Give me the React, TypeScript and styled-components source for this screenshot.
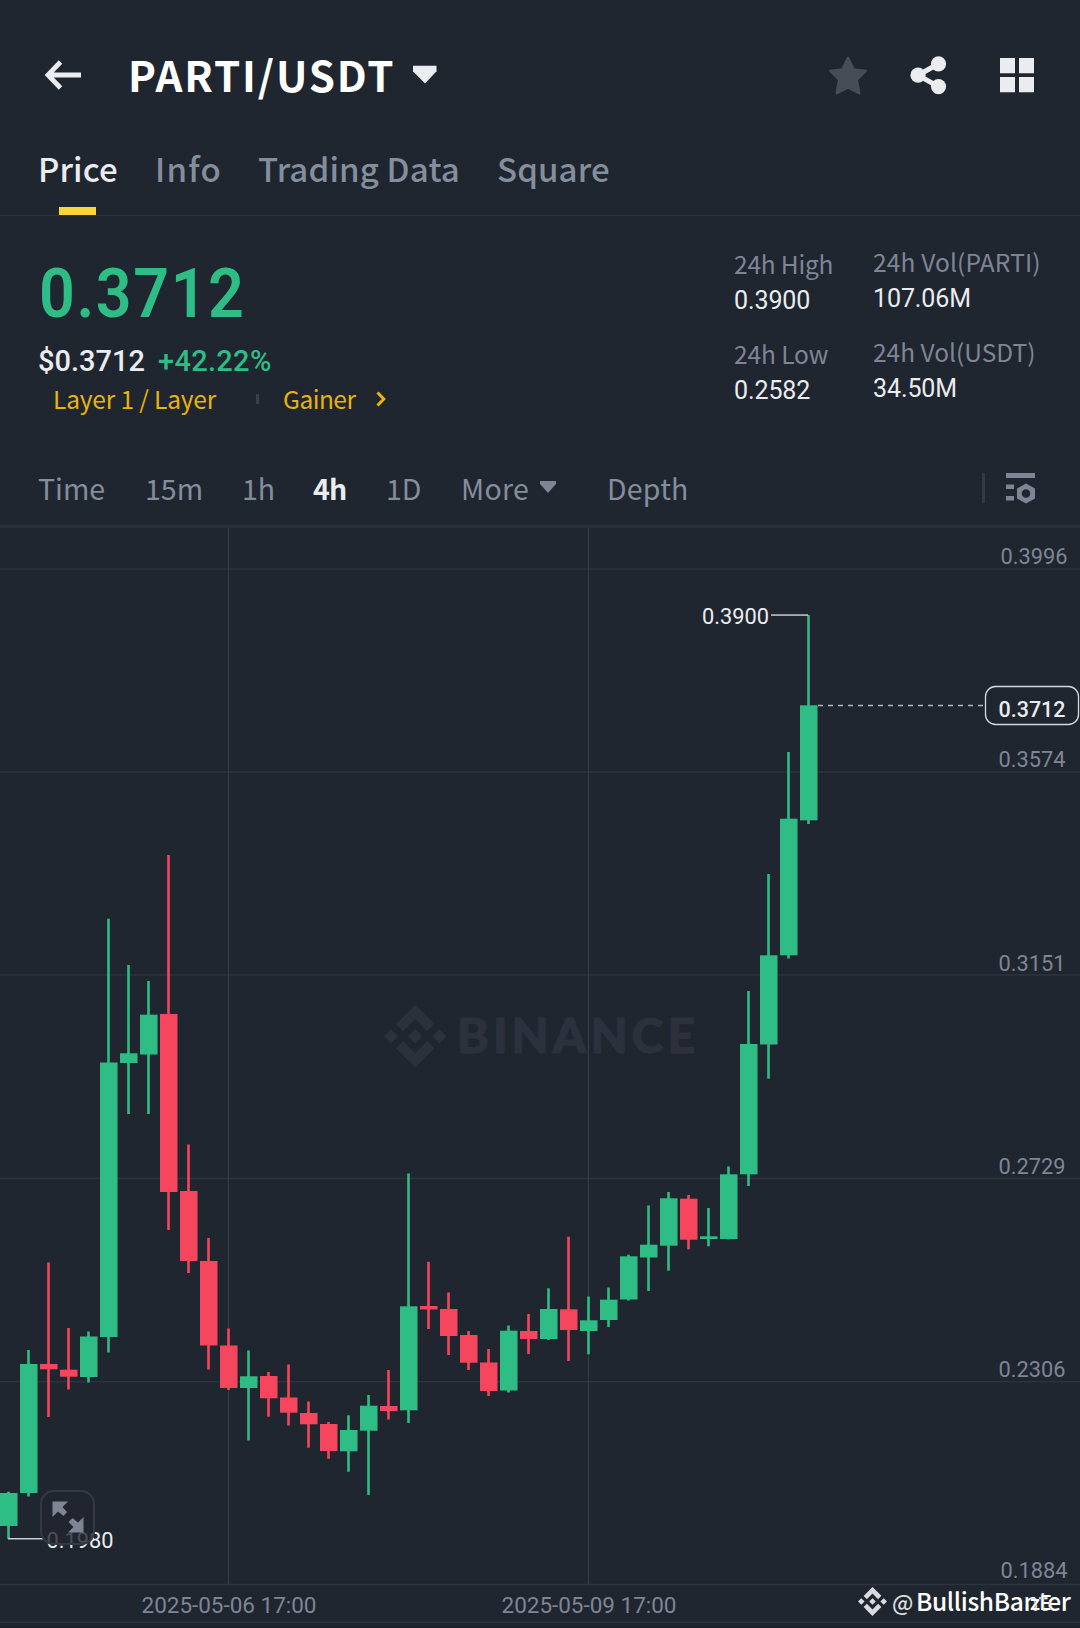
import React from "react";
import styled, { createGlobalStyle } from "styled-components";

const color = {
  bg: "#202630",
  line: "#2e343f",
  text: "#eaecef",
  muted: "#848e9c",
  dim: "#7f8595",
  green: "#2ebd85",
  red: "#f6465d",
  gold: "#e8b30e",
  mark: "#2c313d",
};
const labelFont = '"Noto Sans CJK SC", "Noto Sans", sans-serif';
const numFont = 'Roboto, "Noto Sans", sans-serif';

const GlobalStyle = createGlobalStyle`
  *, *::before, *::after { box-sizing: border-box; }
  body { margin: 0; background: ${color.bg}; }
`;

const Page = styled.main`
  width: 1080px;
  height: 1628px;
  overflow: hidden;
  display: flex;
  flex-direction: column;
  background: ${color.bg};
  color: ${color.text};
  font-family: ${labelFont};
`;

const Header = styled.header`
  height: 138px;
  padding: 44px 46px 0 44px;
  display: flex;
  align-items: flex-start;
`;
const BackIcon = styled.svg`
  width: 38px;
  height: 30px;
  margin-top: 16px;
  margin-right: 46px;
`;
const Pair = styled.h1`
  margin: 0;
  width: 285px;
  font-size: 42px;
  line-height: 60px;
  font-weight: 700;
  letter-spacing: 1.85px;
  color: #fff;
  white-space: nowrap;
`;
const PairCaret = styled.svg`
  width: 24px;
  height: 19px;
  margin-top: 21px;
`;
const Actions = styled.div`
  margin-left: auto;
  display: flex;
  align-items: center;
  height: 62px;
`;
const ActionIcon = styled.svg<{ $gap: number }>`
  width: 38px;
  height: 40px;
  margin-left: ${(p) => p.$gap}px;
`;

const Tabs = styled.nav`
  height: 78px;
  padding-left: 39px;
  display: grid;
  grid-template-columns: 116px 103px 239px 120px;
  border-bottom: 1px solid ${color.line};
`;
const Tab = styled.div<{ $active?: boolean; $spacing?: number }>`
  display: flex;
  flex-direction: column;
  justify-content: space-between;
  font-size: 33px;
  line-height: 60px;
  font-weight: 500;
  white-space: nowrap;
  letter-spacing: ${(p) => p.$spacing ?? 0}px;
  color: ${(p) => (p.$active ? color.text : color.muted)};
`;
const TabLabel = styled.span`
  margin-left: -1px;
`;
const TabMarker = styled.span`
  width: 37px;
  height: 8px;
  margin-left: 20px;
  background: #fcd535;
`;

const Summary = styled.section`
  height: 233px;
  padding: 0 0 0 39px;
  display: grid;
  grid-template-columns: 695px 139px 1fr;
`;
const PriceColumn = styled.div`
  padding-top: 38px;
`;
const LastPrice = styled.div`
  height: 80px;
  font: 600 69px/80px ${numFont};
  letter-spacing: 1.7px;
  color: ${color.green};
  transform: scaleX(0.91);
  transform-origin: left;
`;
const SubPrices = styled.div`
  display: flex;
  height: 39px;
  margin-top: 7px;
`;
const Fiat = styled.span`
  width: 119px;
  margin-left: -1px;
  font: 500 29px/40px ${numFont};
  letter-spacing: 0px;
`;
const Change = styled(Fiat)`
  width: auto;
  margin-left: 1px;
  letter-spacing: 0.3px;
  color: ${color.green};
`;
const Tags = styled.div`
  display: flex;
  align-items: center;
  height: 38px;
  padding-left: 14px;
  color: ${color.gold};
`;
const Tag = styled.span<{ $width: number; $spacing: number }>`
  width: ${(p) => p.$width}px;
  font-size: 24.5px;
  line-height: 38px;
  white-space: nowrap;
  letter-spacing: ${(p) => p.$spacing}px;
`;
const TagDivider = styled.i`
  width: 3px;
  height: 10px;
  margin-right: 24px;
  background: #393f4a;
`;
const Chevron = styled.svg`
  width: 10px;
  height: 16px;
`;

const StatColumn = styled.dl<{ $top: number }>`
  margin: 0;
  padding-top: ${(p) => p.$top}px;
  display: flex;
  flex-direction: column;
  gap: 20px;
`;
const Stat = styled.div`
  height: 70px;
  white-space: nowrap;
`;
const StatLabel = styled.dt<{ $spacing: number }>`
  font-size: 24.5px;
  line-height: 33px;
  letter-spacing: ${(p) => p.$spacing}px;
  color: ${color.dim};
`;
const StatValue = styled.dd`
  margin: 0;
  font: 400 25px/42px ${numFont};
  letter-spacing: -0.1px;
  color: ${color.text};
`;

const Intervals = styled.nav`
  height: 77px;
  padding: 18px 45px 0 38px;
  display: flex;
  align-items: flex-start;
`;
const Interval = styled.span<{ $width: number; $active?: boolean; $spacing?: number }>`
  width: ${(p) => p.$width}px;
  font-size: 28.5px;
  line-height: 44px;
  white-space: nowrap;
  letter-spacing: ${(p) => p.$spacing ?? 0}px;
  font-weight: ${(p) => (p.$active ? 700 : 400)};
  color: ${(p) => (p.$active ? color.text : color.muted)};
`;
const MoreCaret = styled.svg`
  width: 16px;
  height: 12px;
  margin: 15px 51px 0 0;
`;
const Tools = styled.div`
  display: flex;
  gap: 21px;
  margin-left: auto;
  padding-top: 7px;
`;
const ToolDivider = styled.i`
  width: 3px;
  height: 30px;
  background: #343a45;
`;
const SettingsIcon = styled.svg`
  width: 29px;
  height: 31px;
`;

const ChartArea = styled.section`
  position: relative;
  height: 1103px;
`;
const Chart = styled.svg`
  display: block;
  width: 1080px;
  height: 1103px;
`;
const AxisText = styled.text<{ $bright?: boolean; $medium?: boolean }>`
  font-family: ${numFont};
  font-size: 22.5px;
  font-weight: ${(p) => (p.$medium ? 500 : 400)};
  fill: ${(p) => (p.$bright ? color.text : color.dim)};
`;
const MarkText = styled.text`
  font-family: Lato, sans-serif;
  font-size: 48px;
  font-weight: 900;
  fill: ${color.mark};
  stroke: ${color.mark};
  stroke-width: 1px;
`;
const ExpandButton = styled.button`
  position: absolute;
  left: 40px;
  top: 965px;
  width: 55px;
  height: 55px;
  padding: 0 0 2px;
  border: 2px solid #343a45;
  border-radius: 14px;
  background: rgba(32, 38, 48, 0.8);
  display: grid;
  place-items: center;
`;
const Credit = styled.div`
  position: absolute;
  left: 858px;
  top: 1060px;
  height: 32px;
  display: flex;
  align-items: center;
  font-size: 24.5px;
  line-height: 32px;
  font-weight: 500;
  white-space: nowrap;
  color: #fff;
`;
const CreditLogo = styled.svg`
  width: 29px;
  height: 29px;
  margin-right: 5px;
`;
const CreditAt = styled.span`
  width: 24px;
  font-size: 22px;
  color: #d9dbde;
`;
const CreditName = styled.span`
  position: relative;
  letter-spacing: -0.35px;
`;
const VolumeScrap = styled.span`
  position: absolute;
  left: 114px;
  top: 2px;
  font: 500 20px/32px ${numFont};
  text-shadow: 0 0 1px #202630, 0 0 1px #202630;
`;

const BINANCE =
  "M16.624 13.9202l2.7175 2.7154-7.353 7.353-7.353-7.352 2.7175-2.7164 4.6355 4.6595 4.6356-4.6595zm4.6366-4.6366L24 12l-2.7154 2.7164L18.5682 12l2.6924-2.7164zm-9.272.001l2.7163 2.6914-2.7164 2.7174v-.001L9.2721 12l2.7164-2.7154zm-9.2722-.001L5.4088 12l-2.6914 2.6924L0 12l2.7164-2.7164zM11.9885.0115l7.353 7.329-2.7174 2.7154-4.6356-4.6356-4.6355 4.6595-2.7174-2.7154 7.353-7.353z";

// Each candle: direction, wick top, body top, body bottom, wick bottom (page y).
type Candle = ["u" | "d", number, number, number, number];
const candles: Candle[] = [
  ["u", 1491.7, 1493, 1526, 1539],
  ["u", 1350, 1364, 1493, 1496.5],
  ["d", 1262.5, 1364, 1369.3, 1417],
  ["d", 1328, 1369.7, 1376.7, 1389.5],
  ["u", 1331.5, 1336.5, 1377, 1382.5],
  ["u", 918.7, 1062.5, 1337, 1352.5],
  ["u", 965, 1053.3, 1063, 1114],
  ["u", 981, 1014.7, 1054.5, 1114],
  ["d", 855, 1014, 1192, 1230],
  ["d", 1144.5, 1191, 1261, 1273],
  ["d", 1238, 1261, 1345.5, 1369.5],
  ["d", 1328.5, 1345.5, 1388, 1390],
  ["u", 1350.5, 1376.3, 1388, 1440.5],
  ["d", 1372, 1376, 1398.3, 1416.7],
  ["d", 1364.5, 1397.5, 1412.7, 1425.5],
  ["d", 1401.5, 1413, 1424.3, 1447.7],
  ["d", 1422, 1424, 1451, 1458.8],
  ["u", 1415.3, 1430, 1451.3, 1471.7],
  ["u", 1395, 1405.7, 1430.7, 1495],
  ["d", 1370, 1406, 1411, 1419.5],
  ["u", 1173.5, 1306.3, 1410.3, 1423],
  ["d", 1261.8, 1306, 1309.5, 1329],
  ["d", 1292.5, 1309, 1336, 1355],
  ["d", 1331, 1335, 1362.7, 1370],
  ["d", 1349, 1362.5, 1391, 1396],
  ["u", 1325.5, 1330.7, 1390.5, 1392.5],
  ["d", 1314, 1331, 1339, 1354],
  ["u", 1288.3, 1309, 1339, 1340],
  ["d", 1236.7, 1309.3, 1330, 1361],
  ["u", 1296.5, 1320.3, 1331, 1354.3],
  ["u", 1287.5, 1299.7, 1320, 1327],
  ["u", 1254.7, 1256.3, 1299.5, 1300.5],
  ["u", 1205.5, 1244.7, 1257.5, 1291],
  ["u", 1192, 1198.3, 1245.7, 1270.7],
  ["d", 1195, 1198.7, 1239.7, 1249.3],
  ["u", 1208, 1236.3, 1239, 1246.3],
  ["u", 1166.5, 1174.3, 1239, 1239.3],
  ["u", 991, 1044, 1174.3, 1186],
  ["u", 874, 955.3, 1044.5, 1078.7],
  ["u", 752, 818.7, 955.3, 958.5],
  ["u", 615, 705.3, 820.3, 824],
];

const gridLines = [569, 772, 975, 1178.5, 1381.7, 1584.5];
const levels: [string, number, number][] = [
  ["0.3996", 1000.5, 564],
  ["0.3574", 998.5, 767],
  ["0.3151", 998.5, 971],
  ["0.2729", 998.5, 1174],
  ["0.2306", 998.5, 1377],
  ["0.1884", 1000.5, 1578],
];

function CandleChart() {
  return (
    <Chart viewBox="0 525 1080 1103">
      <rect x="0" y="525" width="1080" height="3" fill="#292f39" />
      {gridLines.map((y) => (
        <rect key={y} x="0" y={y - 0.75} width="1080" height="1.5" fill={color.line} />
      ))}
      <rect x="0" y="1621.5" width="1080" height="1.5" fill={color.line} />
      <rect x="0" y="1627" width="1080" height="1" fill="#1c1f2b" />
      <rect x="228" y="528" width="1" height="1056" fill="#383e49" />
      <rect x="588" y="528" width="1" height="1056" fill="#383e49" />

      <g transform="translate(384 1005) scale(2.604)" fill={color.mark}>
        <path d={BINANCE} />
      </g>
      <MarkText x="457" y="1053" textLength="238">BINANCE</MarkText>

      {candles.map(([dir, high, top, bottom, low], i) => (
        <g key={i} fill={dir === "u" ? color.green : color.red}>
          <rect x={i * 20 + 7.2} y={high} width="2.6" height={low - high} />
          <rect x={i * 20} y={top} width="17.5" height={bottom - top} />
        </g>
      ))}

      {levels.map(([label, x, y]) => (
        <AxisText key={label} x={x} y={y} textLength="67" lengthAdjust="spacingAndGlyphs">
          {label}
        </AxisText>
      ))}

      <rect x="771" y="614.3" width="37" height="1.5" fill="#c9ccd1" />
      <AxisText $bright x="702" y="624" textLength="67" lengthAdjust="spacingAndGlyphs">0.3900</AxisText>

      <path d="M818 705.5H983" stroke="#b0b4bb" strokeWidth="1.5" strokeDasharray="5 5" />
      <rect x="985.5" y="686.5" width="93" height="38" rx="10" fill={color.bg} stroke="#d5d8dc" strokeWidth="1.3" />
      <AxisText $bright $medium x="998.5" y="717" textLength="67" lengthAdjust="spacingAndGlyphs">0.3712</AxisText>

      <rect x="8" y="1538" width="35" height="1.5" fill="#c9ccd1" />
      <AxisText $bright x="46.5" y="1547.5" textLength="67" lengthAdjust="spacingAndGlyphs">0.1980</AxisText>

      <AxisText x="141.5" y="1613" textLength="175" lengthAdjust="spacingAndGlyphs">2025-05-06 17:00</AxisText>
      <AxisText x="501.5" y="1613" textLength="175" lengthAdjust="spacingAndGlyphs">2025-05-09 17:00</AxisText>
    </Chart>
  );
}

export default function App() {
  return (
    <Page>
      <GlobalStyle />
      <Header>
        <BackIcon viewBox="0 0 38 30">
          <path d="M37 15H4M16.5 2L4 15l12.5 13" fill="none" stroke={color.text} strokeWidth="4.8" />
        </BackIcon>
        <Pair>PARTI/USDT</Pair>
        <PairCaret viewBox="0 0 24 19">
          <path d="M0 0.7H23.5V6.3L12 18.5L0 6.3Z" fill={color.text} />
        </PairCaret>
        <Actions>
          <ActionIcon $gap={0} viewBox="0 0 38 40">
            <path
              d="M19 3L24.6 14.6L36.5 16L27.8 24.6L30.2 38.2L19 32.4L7.8 38.2L10.2 24.6L1.5 16L13.4 14.6Z"
              fill="#474d57"
              stroke="#474d57"
              strokeWidth="2.6"
              strokeLinejoin="round"
            />
          </ActionIcon>
          <ActionIcon $gap={42} viewBox="0 0 38 40">
            <path d="M29.5 8.8L9 20.2L29.5 31.6" fill="none" stroke={color.text} strokeWidth="5" />
            <circle cx="9" cy="20.2" r="7.6" fill={color.text} />
            <circle cx="29.5" cy="8.8" r="7.6" fill={color.text} />
            <circle cx="29.5" cy="31.6" r="7.6" fill={color.text} />
          </ActionIcon>
          <ActionIcon $gap={49} viewBox="0 0 38 40">
            <path d="M4 3h15v15.3H4zM23 3h15v15.3H23zM4 22h15v15.3H4zM23 22h15v15.3H23z" fill={color.text} />
          </ActionIcon>
        </Actions>
      </Header>

      <Tabs>
        <Tab $active $spacing={0.1}>
          <TabLabel>Price</TabLabel>
          <TabMarker />
        </Tab>
        <Tab $spacing={1.2}>Info</Tab>
        <Tab $spacing={0.15}>Trading Data</Tab>
        <Tab $spacing={0.1}>Square</Tab>
      </Tabs>

      <Summary>
        <PriceColumn>
          <LastPrice>0.3712</LastPrice>
          <SubPrices>
            <Fiat>$0.3712</Fiat>
            <Change>+42.22%</Change>
          </SubPrices>
          <Tags>
            <Tag $width={203} $spacing={-0.15}>Layer 1 / Layer</Tag>
            <TagDivider />
            <Tag $width={93} $spacing={-0.5}>Gainer</Tag>
            <Chevron viewBox="0 0 10 16">
              <path d="M1.5 1.5L7.8 8L1.5 14.5" fill="none" stroke={color.gold} strokeWidth="3" />
            </Chevron>
          </Tags>
        </PriceColumn>
        <StatColumn $top={31}>
          <Stat>
            <StatLabel $spacing={-0.2}>24h High</StatLabel>
            <StatValue>0.3900</StatValue>
          </Stat>
          <Stat>
            <StatLabel $spacing={-0.1}>24h Low</StatLabel>
            <StatValue>0.2582</StatValue>
          </Stat>
        </StatColumn>
        <StatColumn $top={29}>
          <Stat>
            <StatLabel $spacing={0.15}>24h Vol(PARTI)</StatLabel>
            <StatValue>107.06M</StatValue>
          </Stat>
          <Stat>
            <StatLabel $spacing={0}>24h Vol(USDT)</StatLabel>
            <StatValue>34.50M</StatValue>
          </Stat>
        </StatColumn>
      </Summary>

      <Intervals>
        <Interval $width={107}>Time</Interval>
        <Interval $width={97}>15m</Interval>
        <Interval $width={71}>1h</Interval>
        <Interval $width={73} $spacing={-0.8} $active>4h</Interval>
        <Interval $width={75}>1D</Interval>
        <Interval $width={79} $spacing={0.3}>More</Interval>
        <MoreCaret viewBox="0 0 16 12">
          <path d="M0 0H16V3L8 12L0 3Z" fill={color.dim} />
        </MoreCaret>
        <Interval $width={90} $spacing={0.2}>Depth</Interval>
        <Tools>
          <ToolDivider />
          <SettingsIcon viewBox="0 0 29 31">
            <path d="M0 0H29V5H0zM0 11.5H8V16H0zM0 23H8V27.5H0z" fill={color.dim} />
            <path
              fillRule="evenodd"
              d="M20 10.5L29 15.5V25.5L20 30.5L11 25.5V15.5ZM20 16.2A4.3 4.3 0 1 0 20 24.8A4.3 4.3 0 1 0 20 16.2Z"
              fill={color.dim}
            />
          </SettingsIcon>
        </Tools>
      </Intervals>

      <ChartArea>
        <CandleChart />
        <ExpandButton aria-label="Expand chart">
          <svg width="32" height="32" viewBox="0 0 32 32" fill={color.dim}>
            <path d="M0.5 0.5H16L10.5 6L15 11L11.5 15L6 10.5L0.5 16Z" />
            <path d="M31.5 31.5H16L21.5 26L16.5 21L20.5 17L26 21.5L31.5 16Z" />
          </svg>
        </ExpandButton>
        <Credit>
          <CreditLogo viewBox="0 0 24 24" fill="#d9dbde">
            <path d={BINANCE} />
          </CreditLogo>
          <CreditAt>@</CreditAt>
          <CreditName>
            BullishBanter
            <VolumeScrap>zE</VolumeScrap>
          </CreditName>
        </Credit>
      </ChartArea>
    </Page>
  );
}
